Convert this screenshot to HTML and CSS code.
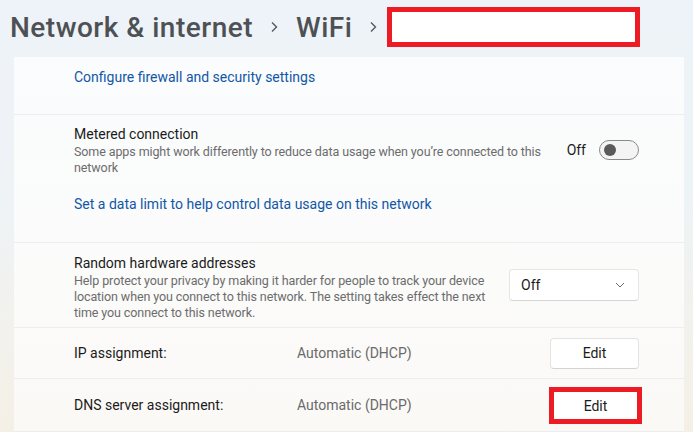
FILE: index.html
```html
<!DOCTYPE html>
<html lang="en">
<head>
    <meta charset="UTF-8">
    <meta name="viewport" content="width=device-width, initial-scale=1.0">
    <title>WiFi properties</title>
    <link rel="stylesheet" href="styles.css">
</head>
<body>
    <header class="crumbs">
        <span class="crumb">Network &amp; internet</span>
        <svg class="sep" width="8" height="12" viewBox="0 0 8 12"><path d="M2 1.5 L6.5 6 L2 10.5" fill="none" stroke="#55585b" stroke-width="1.4"/></svg>
        <span class="crumb">WiFi</span>
        <svg class="sep sep-last" width="8" height="12" viewBox="0 0 8 12"><path d="M2 1.5 L6.5 6 L2 10.5" fill="none" stroke="#55585b" stroke-width="1.4"/></svg>
        <span class="redact"></span>
    </header>

    <main class="card">
        <div class="row row-top">
            <a class="link" href="#">Configure firewall and security settings</a>
        </div>

        <div class="row row-metered">
            <div class="setting">
                <div class="text">
                    <div class="label">Metered connection</div>
                    <div class="desc">Some apps might work differently to reduce data usage when you’re connected to this network</div>
                </div>
                <div class="control">
                    <span class="state">Off</span>
                    <span class="toggle"><span class="knob"></span></span>
                </div>
            </div>
            <a class="link link-limit" href="#">Set a data limit to help control data usage on this network</a>
        </div>

        <div class="row row-random">
            <div class="setting">
                <div class="text text-random">
                    <div class="label">Random hardware addresses</div>
                    <div class="desc">Help protect your privacy by making it harder for people to track your device location when you connect to this network. The setting takes effect the next time you connect to this network.</div>
                </div>
                <div class="dropdown">
                    <span>Off</span>
                    <svg width="10" height="6" viewBox="0 0 10 6"><path d="M1 1 L5 5 L9 1" fill="none" stroke="#6a6a6a" stroke-width="1"/></svg>
                </div>
            </div>
        </div>

        <div class="row row-ip">
            <span class="name">IP assignment:</span>
            <span class="value">Automatic (DHCP)</span>
            <button class="btn">Edit</button>
        </div>

        <div class="row row-dns">
            <span class="name">DNS server assignment:</span>
            <span class="value">Automatic (DHCP)</span>
            <button class="btn btn-marked">Edit</button>
        </div>
    </main>
</body>
</html>
```

FILE: styles.css
```css
body {
    margin: 0;
    height: 432px;
    overflow: hidden;
    font-family: Roboto, "Noto Sans", sans-serif;
    background: linear-gradient(to bottom, #edf3f8 0%, #eef3f6 45%, #f5f0e6 100%);
    color: #1b1b1b;
}

.crumbs {
    height: 54px;
    padding: 0 0 3px 10px;
    display: flex;
    align-items: center;
}

.crumb {
    font-size: 28px;
    font-weight: 500;
    color: #4e5154;
    letter-spacing: 0.5px;
}

.sep {
    margin: 0 18px 0 17px;
}

.sep-last {
    margin-right: 10px;
}

.redact {
    width: 243px;
    height: 30px;
    border: 5px solid #ed1c24;
    background: #ffffff;
}

.card {
    margin-left: 14px;
    width: 670px;
    background: linear-gradient(to bottom, #fafcfd 0%, #fbfbfa 60%, #fbf9f6 100%);
}

.row {
    padding: 0 45px 0 60px;
    border-bottom: 1px solid #ecedee;
}

.link {
    display: block;
    font-size: 14px;
    line-height: 20px;
    color: #1257a6;
    text-decoration: none;
}

.row-top {
    padding-top: 10px;
    padding-bottom: 27px;
}

.row-metered {
    padding-top: 9px;
    padding-bottom: 28px;
}

.link-limit {
    margin-top: 18px;
}

.setting {
    display: flex;
    align-items: center;
    justify-content: space-between;
}

.label {
    font-size: 14px;
    line-height: 20px;
}

.desc {
    font-size: 12.5px;
    line-height: 16px;
    color: #6c6c6c;
    letter-spacing: -0.1px;
}

.text {
    width: 480px;
}

.control {
    display: flex;
    align-items: center;
    gap: 13px;
}

.state {
    font-size: 14px;
}

.toggle {
    width: 38px;
    height: 18px;
    border: 1px solid #8a8a8a;
    border-radius: 10px;
    background: #f4f4f4;
    display: flex;
    align-items: center;
}

.knob {
    width: 12px;
    height: 12px;
    margin-left: 4px;
    border-radius: 50%;
    background: #5a5a5a;
}

.row-random {
    padding-top: 10px;
    padding-bottom: 6px;
}

.text-random {
    width: 425px;
}

.dropdown {
    width: 104px;
    height: 30px;
    padding: 0 13px 0 11px;
    display: flex;
    align-items: center;
    justify-content: space-between;
    background: #ffffff;
    border: 1px solid #e6e6e6;
    border-bottom-color: #d6d6d6;
    border-radius: 4px;
    font-size: 14px;
    margin-top: -4px;
}

.row-ip, .row-dns {
    display: flex;
    align-items: center;
    font-size: 14px;
}

.row-ip {
    height: 50px;
}

.row-dns {
    height: 52px;
}

.name {
    width: 223px;
}

.value {
    flex: 1;
    color: #6a6a6a;
}

.btn {
    width: 89px;
    height: 31px;
    font-family: inherit;
    font-size: 14px;
    color: #1b1b1b;
    background: #ffffff;
    border: 1px solid #e3e3e3;
    border-bottom-color: #d3d3d3;
    border-radius: 4px;
}

.btn-marked {
    width: 93px;
    height: 37px;
    margin-right: -3px;
    margin-top: 1px;
    border: 5px solid #ed1c24;
    border-radius: 0;
}
```
